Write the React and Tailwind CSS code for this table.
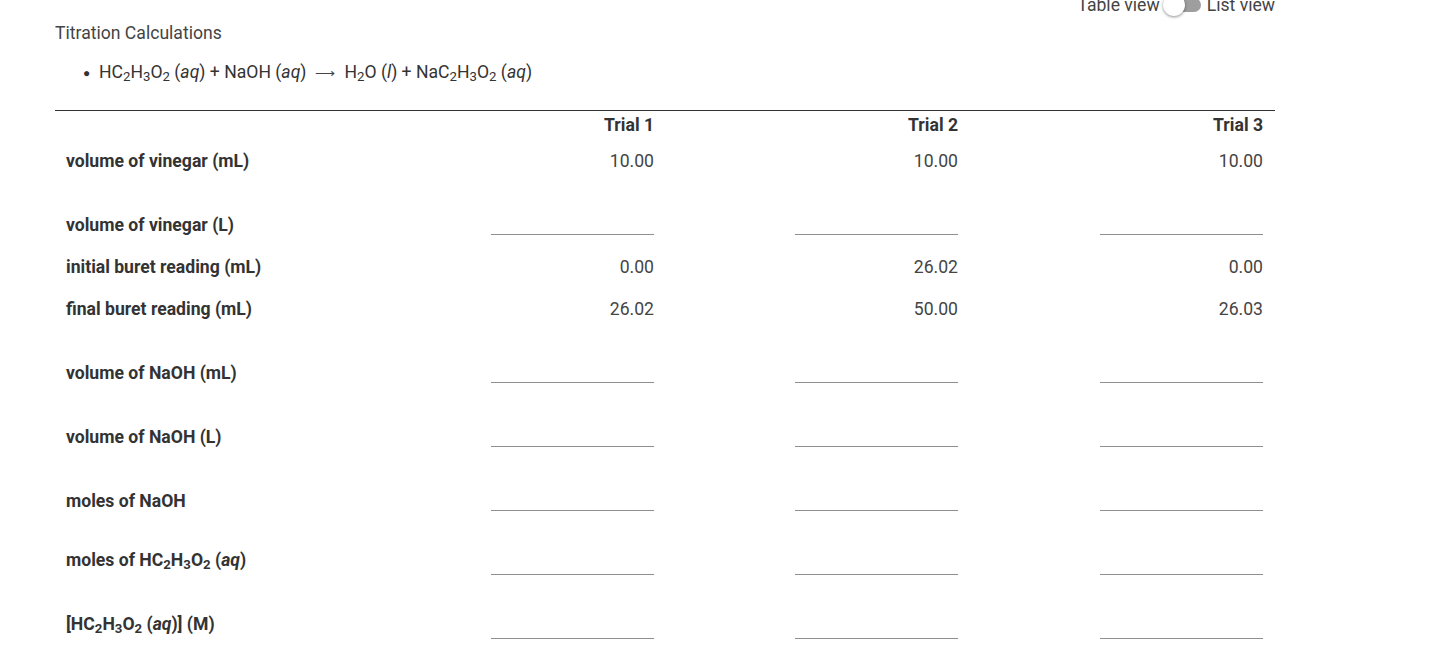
const rows = [
  { label: "volume of vinegar (mL)", values: ["10.00", "10.00", "10.00"] },
  { label: "volume of vinegar (L)", input: true },
  { label: "initial buret reading (mL)", values: ["0.00", "26.02", "0.00"] },
  { label: "final buret reading (mL)", values: ["26.02", "50.00", "26.03"] },
  { label: "volume of NaOH (mL)", input: true },
  { label: "volume of NaOH (L)", input: true },
  { label: "moles of NaOH", input: true },
  {
    label: (
      <>
        moles of HC<sub>2</sub>H<sub>3</sub>O<sub>2</sub> (<i>aq</i>)
      </>
    ),
    input: true,
    sub: true,
  },
  {
    label: (
      <>
        [HC<sub>2</sub>H<sub>3</sub>O<sub>2</sub> (<i>aq</i>)] (M)
      </>
    ),
    input: true,
    sub: true,
  },
];

function Toggle() {
  return (
    <div className="relative w-[38px] h-[20px] ml-[3px] mr-[6px] flex items-center">
      <div className="absolute left-[14px] right-0 h-[14px] rounded-full bg-[#9e9e9e]" />
      <div className="absolute left-0 top-[-1px] w-[22px] h-[22px] rounded-full bg-white shadow-[0_1px_3px_rgba(0,0,0,0.45)]" />
    </div>
  );
}

function Blank() {
  return <div className="w-[163px] h-[20px] border-b border-[#8f8f8f]" />;
}

export default function App() {
  return (
    <div className="bg-white min-h-screen text-[#333] font-['Roboto',sans-serif] text-[17.6px]">
      <div className="w-[1220px] ml-[55px]">
        {/* view switch, page is scrolled slightly so it's cut at the top */}
        <div className="flex justify-end items-center h-[24px] mt-[-7px] text-[#444]">
          <span>Table view</span>
          <Toggle />
          <span>List view</span>
        </div>

        <div className="mt-[4px] leading-[24px] text-[#444]">Titration Calculations</div>

        <ul className="mt-[15px] pl-[28px] leading-[24px] text-[#333]">
          <li className="flex items-center">
            <span className="w-[16px] text-[12px]">●</span>
            <span>
              HC<sub>2</sub>H<sub>3</sub>O<sub>2</sub> (<i>aq</i>) + NaOH (<i>aq</i>)
              <span className="mx-[9px] text-[14px] text-[#444]">⟶</span>
              H<sub>2</sub>O (<i>l</i>) + NaC<sub>2</sub>H<sub>3</sub>O<sub>2</sub> (<i>aq</i>)
            </span>
          </li>
        </ul>

        <div className="mt-[25px] border-t border-[#333]">
          <div className="grid grid-cols-4 h-[29px] items-center font-bold">
            <div />
            <div className="text-right pr-[11px]">Trial 1</div>
            <div className="text-right pr-[12px]">Trial 2</div>
            <div className="text-right pr-[12px]">Trial 3</div>
          </div>

          {rows.map((row, i) =>
            row.input ? (
              <div key={i} className="grid grid-cols-4 h-[64px] items-end pb-[11px]">
                <div
                  className={
                    row.sub
                      ? "pl-[11px] pb-[5px] font-bold leading-[20px] text-[#333]"
                      : "pl-[11px] font-bold leading-[20px] text-[#333]"
                  }
                >
                  {row.label}
                </div>
                {[0, 1, 2].map((j) => (
                  <div key={j} className={j === 0 ? "flex justify-end pr-[11px]" : "flex justify-end pr-[12px]"}>
                    <Blank />
                  </div>
                ))}
              </div>
            ) : (
              <div key={i} className="grid grid-cols-4 h-[42px] items-center">
                <div className="pl-[11px] font-bold text-[#333]">{row.label}</div>
                {row.values.map((v, j) => (
                  <div key={j} className={j === 0 ? "text-right pr-[11px] text-[#444]" : "text-right pr-[12px] text-[#444]"}>
                    {v}
                  </div>
                ))}
              </div>
            )
          )}
        </div>
      </div>
    </div>
  );
}
